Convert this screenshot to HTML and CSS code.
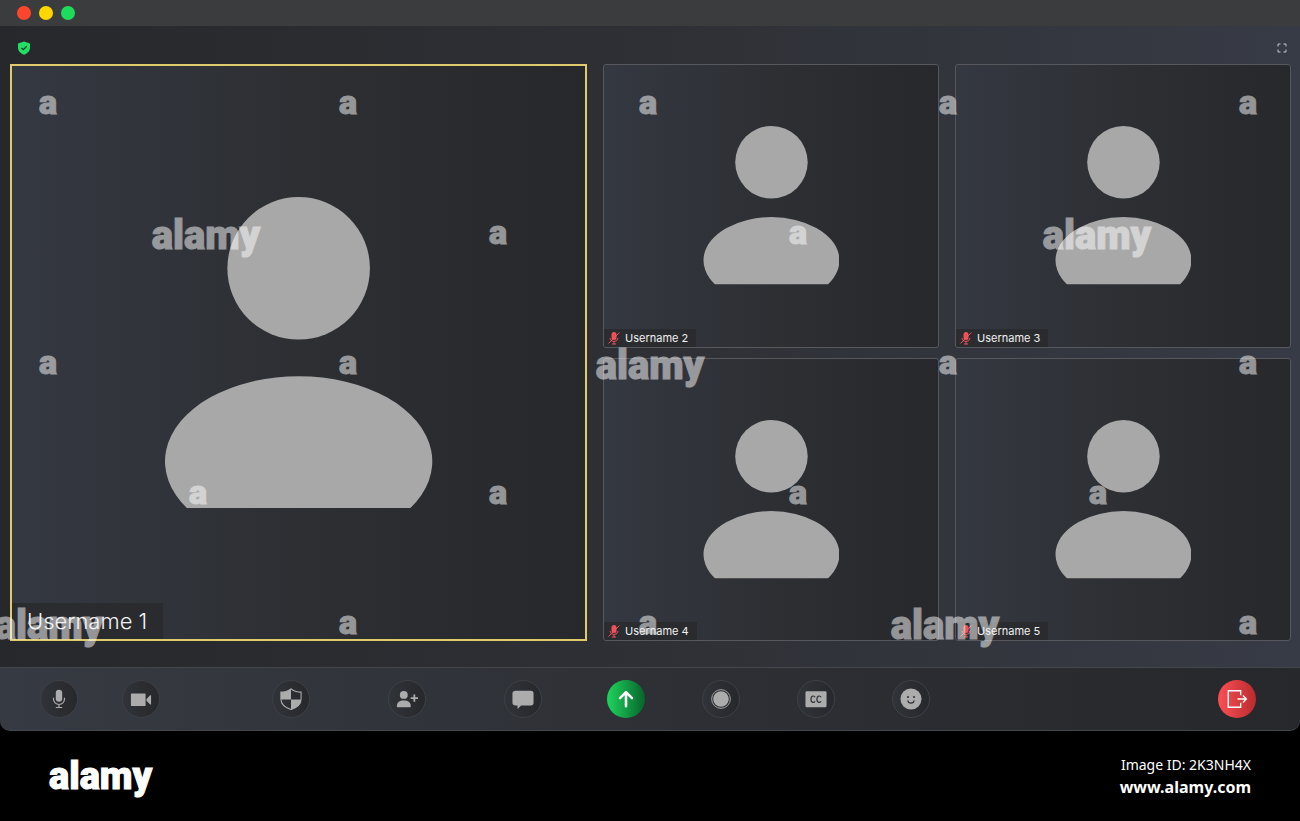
FILE: index.html
```html
<!DOCTYPE html>
<html lang="en">
<head>
    <meta charset="UTF-8">
    <meta name="viewport" content="width=device-width, initial-scale=1.0">
    <title>Video Conference</title>
    <link rel="stylesheet" href="styles.css">
</head>
<body>
    <svg class="defs" aria-hidden="true">
        <symbol id="avatar" viewBox="0 0 272 315">
            <circle cx="136" cy="72" r="72"/>
            <path d="M24 315 A135 86 0 1 1 248 315 Z"/>
        </symbol>
        <symbol id="muted" viewBox="0 0 14 14">
            <rect x="4.500" y="1" width="5" height="8" rx="2.500"/>
            <path d="M3 7 Q3.500 10.500 7 10.500 Q10.500 10.500 11 7 M7 10.500 V13 M5 13 H9 M1.500 12.500 L12.500 1.500" fill="none" stroke="currentColor" stroke-width="1"/>
        </symbol>
    </svg>

    <div class="window">
        <div class="titlebar">
            <button class="dot dot-red" aria-label="Close"></button>
            <button class="dot dot-yellow" aria-label="Minimize"></button>
            <button class="dot dot-green" aria-label="Zoom"></button>
        </div>

        <header class="topbar">
            <svg class="secure" viewBox="0 0 14 14">
                <path d="M7 0.500 L13 2.600 V6.500 C13 10 10.500 12.500 7 13.700 C3.500 12.500 1 10 1 6.500 V2.600 Z" fill="#20df64"/>
                <path d="M4.500 7 L6.300 8.700 L9.700 5.200" fill="none" stroke="#173d28" stroke-width="1.300"/>
            </svg>
            <button class="fullscreen" aria-label="Full screen">
                <svg viewBox="0 0 10 10"><path d="M1 3.500 V1 H3.500 M6.500 1 H9 V3.500 M9 6.500 V9 H6.500 M3.500 9 H1 V6.500"/></svg>
            </button>
        </header>

        <main class="stage">
            <section class="tile tile-main">
                <svg class="avatar" viewBox="0 0 272 315"><use href="#avatar"/></svg>
                <div class="label"><span class="name">Username 1</span></div>
            </section>
            <section class="tile">
                <svg class="avatar" viewBox="0 0 272 315"><use href="#avatar"/></svg>
                <div class="label"><svg class="mic-off"><use href="#muted"/></svg><span class="name">Username 2</span></div>
            </section>
            <section class="tile">
                <svg class="avatar" viewBox="0 0 272 315"><use href="#avatar"/></svg>
                <div class="label"><svg class="mic-off"><use href="#muted"/></svg><span class="name">Username 3</span></div>
            </section>
            <section class="tile">
                <svg class="avatar" viewBox="0 0 272 315"><use href="#avatar"/></svg>
                <div class="label"><svg class="mic-off"><use href="#muted"/></svg><span class="name">Username 4</span></div>
            </section>
            <section class="tile">
                <svg class="avatar" viewBox="0 0 272 315"><use href="#avatar"/></svg>
                <div class="label"><svg class="mic-off"><use href="#muted"/></svg><span class="name">Username 5</span></div>
            </section>
        </main>

        <nav class="toolbar">
            <div class="group group-av">
                <button class="tool" aria-label="Microphone">
                    <svg viewBox="0 0 24 24"><rect x="8.500" y="2" width="7" height="13" rx="3.500"/><path d="M6 10.500 V12 A6 6 0 0 0 18 12 V10.500 M12 18 V21.300 M8.500 21.300 H15.500" fill="none" stroke="currentColor" stroke-width="1.300"/></svg>
                </button>
                <button class="tool" aria-label="Camera">
                    <svg viewBox="0 0 24 24"><rect x="1" y="6" width="16" height="13.500" rx="0.500"/><path d="M18 12 L22 8 H23 V18 H22 L18 14 Z"/></svg>
                </button>
            </div>
            <div class="group group-manage">
                <button class="tool" aria-label="Security">
                    <svg viewBox="0 0 24 24"><path d="M12 1 Q16 4.500 23 4.500 V12 C23 17.500 18 21.500 12 23.500 C6 21.500 1 17.500 1 12 V4.500 Q8 4.500 12 1 Z" fill="none" stroke="currentColor" stroke-width="1.200"/><path d="M12 1 V12.500 H1 V4.500 Q8 4.500 12 1 Z M12 12.500 H23 C22.700 18 17.500 21.700 12 23.500 Z"/></svg>
                </button>
                <button class="tool" aria-label="Add participant">
                    <svg viewBox="0 0 24 24"><circle cx="8.500" cy="7.500" r="4.300"/><path d="M1 21 V19 C1 15.500 4 13.500 8.500 13.500 S16 15.500 16 19 V21 Z"/><path d="M16 11 H24 M20 7 V15" stroke="currentColor" stroke-width="2"/></svg>
                </button>
                <button class="tool" aria-label="Chat">
                    <svg viewBox="0 0 24 24"><path d="M4 3 H20.500 Q23.500 3 23.500 6 V16 Q23.500 19 20.500 19 H10 L6 23 V19 H4 Q0.500 19 0.500 16 V6 Q0.500 3 4 3 Z"/></svg>
                </button>
            </div>
            <div class="group group-share">
                <button class="tool tool-share" aria-label="Share screen">
                    <svg viewBox="0 0 24 24"><path d="M12 20 V5 M5.500 11 L12 4.500 L18.500 11" fill="none" stroke="currentColor" stroke-width="2.800" stroke-linecap="round" stroke-linejoin="round"/></svg>
                </button>
                <button class="tool" aria-label="Record">
                    <svg viewBox="0 0 24 24"><circle cx="12" cy="12" r="8.500"/><circle cx="12" cy="12" r="10.200" fill="none" stroke="currentColor" stroke-width="1"/></svg>
                </button>
                <button class="tool" aria-label="Captions">
                    <svg viewBox="0 0 24 24"><rect x="0.500" y="3.500" width="23" height="17.500" rx="1.500"/><path d="M11 10 C10.500 9 9.800 8.700 9 8.700 C7.500 8.700 6.500 10 6.500 12.200 S7.500 15.700 9 15.700 C9.800 15.700 10.500 15.400 11 14.400 M17.500 10 C17 9 16.300 8.700 15.500 8.700 C14 8.700 13 10 13 12.200 S14 15.700 15.500 15.700 C16.300 15.700 17 15.400 17.500 14.400" fill="none" stroke="#303135" stroke-width="1.300"/></svg>
                </button>
                <button class="tool" aria-label="Reactions">
                    <svg viewBox="0 0 24 24"><circle cx="12" cy="12" r="11.500"/><circle cx="8.700" cy="9.800" r="1.100" fill="#303135"/><circle cx="15.300" cy="9.800" r="1.100" fill="#303135"/><path d="M8.500 13.500 Q9 16.500 12 16.500 T15.500 13.500" fill="none" stroke="#303135" stroke-width="1.200"/></svg>
                </button>
            </div>
            <button class="tool tool-leave" aria-label="Leave">
                <svg viewBox="0 0 24 24"><path d="M16 8 V3 H2.500 V21 H16 V16 M12.500 12 H22 M18.500 8.300 L22.200 12 L18.500 15.700" fill="none" stroke="currentColor" stroke-width="1.500"/></svg>
            </button>
        </nav>
    </div>

    <footer class="credit">
        <div class="wordmark">alamy</div>
        <div class="credit-info">
            <div>Image ID: 2K3NH4X</div>
            <a href="#">www.alamy.com</a>
        </div>
    </footer>

    <!-- watermark, sits over the whole window -->
    <svg class="watermark" aria-hidden="true">
        <g class="mark-small">
            <text x="48" y="114">a</text>
            <text x="348" y="114">a</text>
            <text x="648" y="114">a</text>
            <text x="948" y="114">a</text>
            <text x="1248" y="114">a</text>
            <text x="498" y="244">a</text>
            <text x="798" y="244">a</text>
            <text x="48" y="374">a</text>
            <text x="348" y="374">a</text>
            <text x="948" y="374">a</text>
            <text x="1248" y="374">a</text>
            <text x="198" y="504">a</text>
            <text x="498" y="504">a</text>
            <text x="798" y="504">a</text>
            <text x="1098" y="504">a</text>
            <text x="348" y="634">a</text>
            <text x="648" y="634">a</text>
            <text x="1248" y="634">a</text>
        </g>
        <g class="mark-large">
            <text x="206" y="249">alamy</text>
            <text x="1097" y="249">alamy</text>
            <text x="650" y="379">alamy</text>
            <text x="49" y="639">alamy</text>
            <text x="945" y="639">alamy</text>
        </g>
    </svg>
</body>
</html>
```
FILE: styles.css
```css
* {
    box-sizing: border-box;
    margin: 0;
    padding: 0;
}

body {
    position: relative;
    min-height: 100vh;
    background-color: #000;
    font-family: Inter, 'Liberation Sans', sans-serif;
    color: #fff;
}

button {
    border: none;
    background: none;
    cursor: pointer;
}

.defs {
    position: absolute;
    width: 0;
    height: 0;
}

.window {
    overflow: hidden;
    border-radius: 0 0 10px 10px;
    background: linear-gradient(to right, #27282b, #2e3035 50%, #373b45);
}

.titlebar {
    display: flex;
    align-items: center;
    gap: 8px;
    height: 26px;
    padding-left: 17px;
    background-color: #3b3c3d;
}

.dot {
    width: 14px;
    height: 14px;
    border-radius: 50%;
}

.dot-red {
    background-color: #ff452c;
}

.dot-yellow {
    background-color: #ffd600;
}

.dot-green {
    background-color: #1ddc5c;
}

.topbar {
    display: flex;
    align-items: center;
    justify-content: space-between;
    height: 38px;
    padding: 5px 13px 0 17px;
}

.secure {
    width: 14px;
    height: 14px;
}

.fullscreen {
    display: flex;
}

.fullscreen svg {
    width: 10px;
    height: 10px;
    fill: none;
    stroke: #c4c5c8;
    stroke-width: 1;
}

.stage {
    display: grid;
    grid-template-columns: 577fr 336fr 336fr;
    grid-template-rows: 1fr 1fr;
    gap: 10px 16px;
    padding: 0 9px 26px 10px;
}

.tile {
    position: relative;
    display: flex;
    align-items: center;
    justify-content: center;
    overflow: hidden;
    border: 1px solid #56585e;
    border-radius: 3px;
    background: linear-gradient(to right, #343841, #2d2f33 50%, #27282b);
}

.tile-main {
    grid-row: 1 / 3;
    aspect-ratio: 1;
    border: 2px solid #e0cb6c;
    border-radius: 0;
}

.avatar {
    width: 41%;
    fill: #a8a8a8;
}

.tile-main .avatar {
    width: 47%;
}

.label {
    position: absolute;
    left: 0;
    bottom: 0;
    display: flex;
    align-items: center;
    gap: 4px;
    height: 18px;
    padding: 0 8px 0 3px;
    background-color: rgba(39, 40, 42, 0.7);
    font-size: 11px;
}

.tile-main .label {
    height: 36px;
    padding: 0 16px 0 15px;
    font-size: 22px;
    font-weight: 300;
}

/* names stay readable above the watermark */
.name {
    position: relative;
    z-index: 2;
    color: #f2f2f2;
}

.mic-off {
    width: 14px;
    height: 14px;
    color: #f0505a;
    fill: currentColor;
}

.toolbar {
    display: flex;
    align-items: center;
    height: 64px;
    padding: 0 44px 0 40px;
    border: 1px solid #45474c;
    border-width: 1px 0;
    border-radius: 0 0 10px 10px;
    background: linear-gradient(to right, #363a42, #2d2f34 55%, #27282b);
}

.group {
    display: flex;
}

.group-av {
    gap: 44px;
}

.group-manage {
    gap: 78px;
    margin-left: 112px;
}

.group-share {
    gap: 57px;
    margin-left: 65px;
}

.tool {
    display: flex;
    align-items: center;
    justify-content: center;
    width: 38px;
    height: 38px;
    border: 1px solid #3e4045;
    border-radius: 50%;
    background: linear-gradient(to right, #303339, #27282b);
    color: #acacad;
}

.tool svg {
    width: 22px;
    height: 22px;
    fill: currentColor;
}

.tool-share {
    border: none;
    background: linear-gradient(to right, #1fd45d, #07642c);
    color: #fff;
}

.tool-leave {
    margin-left: auto;
    border: none;
    background: linear-gradient(to right, #fb5054, #b92b2f);
    color: #fff;
}

.credit {
    display: flex;
    align-items: center;
    justify-content: space-between;
    height: 90px;
    padding: 0 49px;
}

.wordmark,
.watermark {
    font-family: Roboto, 'Liberation Sans', sans-serif;
    font-weight: 900;
}

.wordmark {
    font-size: 38px;
    line-height: 48px;
    -webkit-text-stroke: 1px #fff;
}

.credit-info {
    font-family: 'Noto Sans', sans-serif;
    font-size: 14px;
    line-height: 22px;
    text-align: right;
}

.credit-info a {
    color: #fff;
    font-size: 16px;
    font-weight: bold;
    text-decoration: none;
}

.watermark {
    position: absolute;
    top: 0;
    left: 0;
    z-index: 1;
    width: 100%;
    height: 100%;
    fill: #fff;
    stroke: #fff;
    stroke-width: 1px;
    text-anchor: middle;
    pointer-events: none;
}

.mark-small,
.mark-large {
    opacity: 0.5;
}

.mark-small {
    font-size: 34px;
}

.mark-large {
    font-size: 40px;
}
```
